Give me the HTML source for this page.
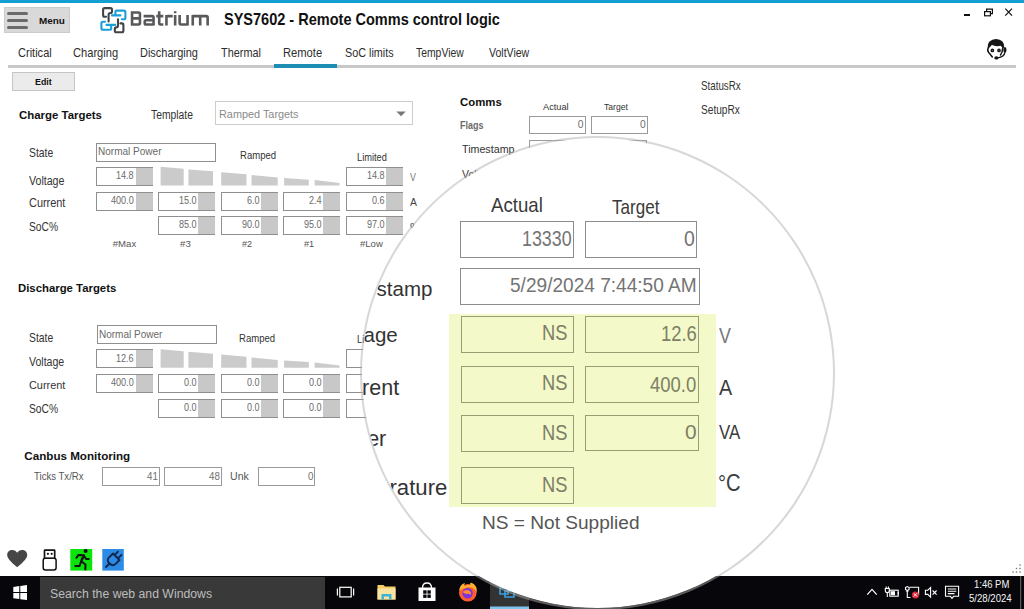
<!DOCTYPE html><html><head><meta charset="utf-8"><style>
html,body{margin:0;padding:0;}
body{width:1024px;height:609px;overflow:hidden;position:relative;background:#fff;font-family:"Liberation Sans",sans-serif;}
.t{position:absolute;white-space:nowrap;line-height:1;transform-origin:0 0;}
.b{position:absolute;box-sizing:border-box;}
svg{position:absolute;overflow:visible;}
</style></head><body>
<div class="b" style="left:0px;top:0px;width:1024px;height:3px;background:#12a0d3"></div>
<div class="b" style="left:4px;top:7px;width:66px;height:26px;background:#d9d9d9;border:1px solid #cbcbcb"></div>
<div class="b" style="left:7px;top:11.5px;width:21px;height:3px;background:#6a6a6a;border-radius:1.5px"></div>
<div class="b" style="left:7px;top:18.5px;width:21px;height:3px;background:#6a6a6a;border-radius:1.5px"></div>
<div class="b" style="left:7px;top:25.5px;width:21px;height:3px;background:#6a6a6a;border-radius:1.5px"></div>
<div class="t" style="left:38.94px;top:16.00px;font-size:9.45px;color:#111;font-weight:bold;transform:scaleX(1.0507);">Menu</div>
<svg style="left:0;top:0" width="140" height="40" viewBox="0 0 140 40">
<g fill="none" stroke-width="2.1" stroke-linecap="round" stroke-linejoin="round">
<path d="M108.6,21.5 V18 M106,16.8 H104.6 Q103.1,16.8 103.1,15.3 V9.6 Q103.1,8.1 104.6,8.1 H110.5 Q112,8.1 112,9.6 V11.5 Q112,13 110.5,13 Q108.6,13 108.6,15 V18" stroke="#444446"/>
<path d="M112,15.4 H118 M116.5,10.6 H123.9 Q125.4,10.6 125.4,12.1 V17.7 Q125.4,19.2 123.9,19.2 H121.8 M116.5,10.6 Q115.4,10.6 115.4,12 V13.4 Q115.4,15.4 117.4,15.4 H120.5" stroke="#1aa0d6"/>
<path d="M115.2,24.9 H109 M110.3,29.8 H102.9 Q101.4,29.8 101.4,28.3 V23.2 Q101.4,21.7 102.9,21.7 H105 M110.3,29.8 Q111.2,29.8 111.2,28.5 V26.9 Q111.2,24.9 109.2,24.9 H106.5" stroke="#1aa0d6"/>
<path d="M118,19.2 V23 M120.5,23.4 H121.9 Q123.4,23.4 123.4,24.9 V30.8 Q123.4,32.3 121.9,32.3 H116.3 Q114.8,32.3 114.8,30.8 V29 Q114.8,27.4 116.3,27.4 Q118,27.4 118,25.4 V23" stroke="#444446"/>
</g></svg>
<svg style="left:0;top:0" width="220" height="40"><g fill="none" stroke="#59595b" stroke-width="2.6" stroke-linejoin="round" stroke-linecap="butt">
<path d="M132.05,11.3 V25.6 M130.9,12.45 H138.5 Q139.95,12.45 139.95,13.9 V17 Q139.95,18.4 138.5,18.4 H132.05 M132.05,18.4 H138.8 Q139.95,18.4 139.95,19.8 V23 Q139.95,24.45 138.5,24.45 H130.9"/>
<path d="M143.6,16.15 H152.2 Q153.55,16.15 153.55,17.5 V25.6 M153.55,24.45 H146 Q144.75,24.45 144.75,23.2 V21.5 Q144.75,20.3 146,20.3 H153.55"/>
<path d="M159.2,11.3 V23.1 Q159.2,24.45 160.5,24.45 H163.3 M156.3,16.15 H163.3"/>
<path d="M166.45,15 V25.6 M166.45,17.5 Q166.45,16.15 167.8,16.15 H172.7"/>
<path d="M175.15,15 V25.6 M175.15,11.3 V13.3"/>
<path d="M179.65,15 V23.1 Q179.65,24.45 181,24.45 H187.55 M187.55,15 V25.6"/>
<path d="M192.75,15 V25.6 M192.75,16.15 H206.3 Q207.65,16.15 207.65,17.5 V25.6 M200.2,16.15 V25.6"/>
</g></svg>
<div class="t" style="left:224.48px;top:12.00px;font-size:15.99px;color:#111;font-weight:bold;transform:scaleX(0.9081);">SYS7602 - Remote Comms control logic</div>
<div class="b" style="left:964px;top:14px;width:6px;height:1.5px;background:#111"></div>
<svg style="left:0;top:0" width="1024" height="40"><g fill="none" stroke="#111" stroke-width="1.2">
<rect x="984.6" y="11.6" width="5.8" height="4.2"/><path d="M986.6,11.6 V9.2 H992.4 V13.6 H990.4"/>
<path d="M1005.3,8.6 L1012,15.6 M1012,8.6 L1005.3,15.6"/></g></svg>
<div class="t" style="left:18.24px;top:48.00px;font-size:11.92px;color:#2d2d2d;font-weight:normal;transform:scaleX(0.9267);">Critical</div>
<div class="t" style="left:72.73px;top:48.00px;font-size:11.92px;color:#2d2d2d;font-weight:normal;transform:scaleX(0.9342);">Charging</div>
<div class="t" style="left:140.10px;top:48.00px;font-size:11.92px;color:#2d2d2d;font-weight:normal;transform:scaleX(0.9217);">Discharging</div>
<div class="t" style="left:220.76px;top:48.00px;font-size:11.92px;color:#2d2d2d;font-weight:normal;transform:scaleX(0.9145);">Thermal</div>
<div class="t" style="left:283.08px;top:48.00px;font-size:11.92px;color:#2d2d2d;font-weight:normal;transform:scaleX(0.9397);">Remote</div>
<div class="t" style="left:345.11px;top:48.00px;font-size:11.92px;color:#2d2d2d;font-weight:normal;transform:scaleX(0.9076);">SoC limits</div>
<div class="t" style="left:416.47px;top:48.00px;font-size:11.92px;color:#2d2d2d;font-weight:normal;transform:scaleX(0.8723);">TempView</div>
<div class="t" style="left:488.95px;top:48.00px;font-size:11.92px;color:#2d2d2d;font-weight:normal;transform:scaleX(0.8846);">VoltView</div>
<div class="b" style="left:8px;top:65px;width:1008px;height:2.5px;background:#c8c8c8"></div>
<div class="b" style="left:274px;top:64px;width:63px;height:3.5px;background:#1e8db3"></div>
<svg style="left:0;top:0" width="1024" height="70">
<path d="M988,48.8 Q987.2,44 989.5,41.5 Q992.3,38.8 996,38.9 Q1000.2,38.9 1002.5,41.5 Q1004.3,43.6 1004.2,47.5 L1002.8,48.5 Q1001.5,46.5 1000.5,45.8 Q997,46.8 993.5,45.6 Q992.6,45.2 992,44.8 Q990.5,46.8 988,48.8Z" fill="#161616"/>
<path d="M988.3,47.5 Q987,50.5 988.7,52.5 Q990.3,54.2 992.3,57" fill="none" stroke="#161616" stroke-width="1.5" stroke-linecap="round"/>
<path d="M1002.6,48.5 Q1002.5,52.5 1000.5,55" fill="none" stroke="#161616" stroke-width="1.5" stroke-linecap="round"/>
<ellipse cx="1004.9" cy="49.9" rx="1.6" ry="2.8" fill="#161616"/>
<path d="M1005,52.2 Q1004.2,57.3 997.8,57.8" fill="none" stroke="#161616" stroke-width="1.3"/>
<ellipse cx="996.4" cy="57.9" rx="2.1" ry="1.7" fill="#161616"/>
<circle cx="992.4" cy="50.4" r="1.1" fill="none" stroke="#161616" stroke-width="1.5"/>
<circle cx="999" cy="50.4" r="1.1" fill="none" stroke="#161616" stroke-width="1.5"/>
</svg>
<div class="b" style="left:12px;top:72px;width:63px;height:19px;background:#ebebeb;border:1px solid #c6c6c6"></div>
<div class="t" style="left:34.81px;top:78.00px;font-size:9.30px;color:#111;font-weight:bold;transform:scaleX(0.9505);">Edit</div>
<div class="t" style="left:701.26px;top:81.00px;font-size:11.92px;color:#333;font-weight:normal;transform:scaleX(0.8220);">StatusRx</div>
<div class="t" style="left:701.24px;top:104.00px;font-size:12.50px;color:#333;font-weight:normal;transform:scaleX(0.8107);">SetupRx</div>
<div class="t" style="left:19.33px;top:109.00px;font-size:11.63px;color:#111;font-weight:bold;transform:scaleX(0.9829);">Charge Targets</div>
<div class="t" style="left:150.77px;top:109.00px;font-size:12.50px;color:#333;font-weight:normal;transform:scaleX(0.8270);">Template</div>
<div class="b" style="left:214.5px;top:101.3px;width:198.3px;height:23.4px;background:#fff;border:1px solid #cdcdcd"></div>
<div class="t" style="left:218.81px;top:109.00px;font-size:11.19px;color:#8a8a8a;font-weight:normal;transform:scaleX(0.9716);">Ramped Targets</div>
<svg style="left:0;top:0" width="1" height="1"><polygon points="396.4,111.6 405.8,111.6 401.1,116.2" fill="#777"/></svg>
<div class="t" style="left:29.03px;top:147.00px;font-size:12.35px;color:#333;font-weight:normal;transform:scaleX(0.8400);">State</div>
<div class="t" style="left:28.95px;top:175.00px;font-size:12.65px;color:#333;font-weight:normal;transform:scaleX(0.8398);">Voltage</div>
<div class="t" style="left:28.95px;top:198.00px;font-size:11.92px;color:#333;font-weight:normal;transform:scaleX(0.9168);">Current</div>
<div class="t" style="left:29.03px;top:222.00px;font-size:11.92px;color:#333;font-weight:normal;transform:scaleX(0.8623);">SoC%</div>
<div class="b" style="left:96.2px;top:142.6px;width:119.8px;height:19px;background:#fff;border:1px solid #8f8f8f"></div>
<div class="t" style="left:98.28px;top:146.00px;font-size:10.90px;color:#6a6a6a;font-weight:normal;transform:scaleX(0.9208);">Normal Power</div>
<div class="t" style="left:239.52px;top:150.00px;font-size:11.05px;color:#333;font-weight:normal;transform:scaleX(0.8646);">Ramped</div>
<div class="t" style="left:356.74px;top:153.00px;font-size:10.47px;color:#333;font-weight:normal;transform:scaleX(0.8850);">Limited</div>
<div class="b" style="left:95.5px;top:166.8px;width:57px;height:19.1px;background:#fff;border:1px solid #8f8f8f"></div>
<div class="b" style="left:135.5px;top:166.8px;width:17px;height:19.1px;background:#c8c8c8;border-top:1px solid #8f8f8f;border-bottom:1px solid #8f8f8f"></div>
<div class="t" style="left:116.05px;top:171.00px;font-size:10.30px;color:#6b6b6b;font-weight:normal;transform:scaleX(0.8800);">14.8</div>
<div class="b" style="left:346.2px;top:166.8px;width:57px;height:19.1px;background:#fff;border:1px solid #8f8f8f"></div>
<div class="b" style="left:386.2px;top:166.8px;width:17px;height:19.1px;background:#c8c8c8;border-top:1px solid #8f8f8f;border-bottom:1px solid #8f8f8f"></div>
<div class="t" style="left:366.75px;top:171.00px;font-size:10.30px;color:#6b6b6b;font-weight:normal;transform:scaleX(0.8800);">14.8</div>
<div class="b" style="left:95.5px;top:191.6px;width:57px;height:19.1px;background:#fff;border:1px solid #8f8f8f"></div>
<div class="b" style="left:135.5px;top:191.6px;width:17px;height:19.1px;background:#c8c8c8;border-top:1px solid #8f8f8f;border-bottom:1px solid #8f8f8f"></div>
<div class="t" style="left:110.97px;top:196.00px;font-size:10.30px;color:#6b6b6b;font-weight:normal;transform:scaleX(0.8800);">400.0</div>
<div class="b" style="left:158.3px;top:191.6px;width:57px;height:19.1px;background:#fff;border:1px solid #8f8f8f"></div>
<div class="b" style="left:198.3px;top:191.6px;width:17px;height:19.1px;background:#c8c8c8;border-top:1px solid #8f8f8f;border-bottom:1px solid #8f8f8f"></div>
<div class="t" style="left:178.81px;top:196.00px;font-size:10.30px;color:#6b6b6b;font-weight:normal;transform:scaleX(0.8800);">15.0</div>
<div class="b" style="left:221.2px;top:191.6px;width:57px;height:19.1px;background:#fff;border:1px solid #8f8f8f"></div>
<div class="b" style="left:261.2px;top:191.6px;width:17px;height:19.1px;background:#c8c8c8;border-top:1px solid #8f8f8f;border-bottom:1px solid #8f8f8f"></div>
<div class="t" style="left:246.75px;top:196.00px;font-size:10.30px;color:#6b6b6b;font-weight:normal;transform:scaleX(0.8800);">6.0</div>
<div class="b" style="left:283.3px;top:191.6px;width:57px;height:19.1px;background:#fff;border:1px solid #8f8f8f"></div>
<div class="b" style="left:323.3px;top:191.6px;width:17px;height:19.1px;background:#c8c8c8;border-top:1px solid #8f8f8f;border-bottom:1px solid #8f8f8f"></div>
<div class="t" style="left:308.77px;top:196.00px;font-size:10.30px;color:#6b6b6b;font-weight:normal;transform:scaleX(0.8800);">2.4</div>
<div class="b" style="left:346.2px;top:191.6px;width:57px;height:19.1px;background:#fff;border:1px solid #8f8f8f"></div>
<div class="b" style="left:386.2px;top:191.6px;width:17px;height:19.1px;background:#c8c8c8;border-top:1px solid #8f8f8f;border-bottom:1px solid #8f8f8f"></div>
<div class="t" style="left:371.80px;top:196.00px;font-size:10.30px;color:#6b6b6b;font-weight:normal;transform:scaleX(0.8800);">0.6</div>
<div class="b" style="left:158.3px;top:216.2px;width:57px;height:19.1px;background:#fff;border:1px solid #8f8f8f"></div>
<div class="b" style="left:198.3px;top:216.2px;width:17px;height:19.1px;background:#c8c8c8;border-top:1px solid #8f8f8f;border-bottom:1px solid #8f8f8f"></div>
<div class="t" style="left:178.81px;top:220.00px;font-size:10.30px;color:#6b6b6b;font-weight:normal;transform:scaleX(0.8800);">85.0</div>
<div class="b" style="left:221.2px;top:216.2px;width:57px;height:19.1px;background:#fff;border:1px solid #8f8f8f"></div>
<div class="b" style="left:261.2px;top:216.2px;width:17px;height:19.1px;background:#c8c8c8;border-top:1px solid #8f8f8f;border-bottom:1px solid #8f8f8f"></div>
<div class="t" style="left:241.71px;top:220.00px;font-size:10.30px;color:#6b6b6b;font-weight:normal;transform:scaleX(0.8800);">90.0</div>
<div class="b" style="left:283.3px;top:216.2px;width:57px;height:19.1px;background:#fff;border:1px solid #8f8f8f"></div>
<div class="b" style="left:323.3px;top:216.2px;width:17px;height:19.1px;background:#c8c8c8;border-top:1px solid #8f8f8f;border-bottom:1px solid #8f8f8f"></div>
<div class="t" style="left:303.81px;top:220.00px;font-size:10.30px;color:#6b6b6b;font-weight:normal;transform:scaleX(0.8800);">95.0</div>
<div class="b" style="left:346.2px;top:216.2px;width:57px;height:19.1px;background:#fff;border:1px solid #8f8f8f"></div>
<div class="b" style="left:386.2px;top:216.2px;width:17px;height:19.1px;background:#c8c8c8;border-top:1px solid #8f8f8f;border-bottom:1px solid #8f8f8f"></div>
<div class="t" style="left:366.71px;top:220.00px;font-size:10.30px;color:#6b6b6b;font-weight:normal;transform:scaleX(0.8800);">97.0</div>
<svg style="left:0;top:0" width="1" height="1"><polygon points="160.6,166.8 183.7,168.8 183.7,185.4 160.6,185.4" fill="#cbcbcb"/></svg>
<svg style="left:0;top:0" width="1" height="1"><polygon points="188.4,169.4 213,171.3 213,185.4 188.4,185.4" fill="#cbcbcb"/></svg>
<svg style="left:0;top:0" width="1" height="1"><polygon points="221.2,172.2 246.5,174.3 246.5,185.4 221.2,185.4" fill="#cbcbcb"/></svg>
<svg style="left:0;top:0" width="1" height="1"><polygon points="251.5,175 277.7,177.6 277.7,185.4 251.5,185.4" fill="#cbcbcb"/></svg>
<svg style="left:0;top:0" width="1" height="1"><polygon points="284.1,178 308.8,179.7 308.8,185.4 284.1,185.4" fill="#cbcbcb"/></svg>
<svg style="left:0;top:0" width="1" height="1"><polygon points="314.6,180.1 339.5,183 339.5,185.4 314.6,185.4" fill="#cbcbcb"/></svg>
<div class="t" style="left:112.76px;top:239.00px;font-size:9.59px;color:#555;font-weight:normal;">#Max</div>
<div class="t" style="left:179.96px;top:239.00px;font-size:9.59px;color:#555;font-weight:normal;transform:scaleX(1.0091);">#3</div>
<div class="t" style="left:242.16px;top:239.00px;font-size:9.59px;color:#555;font-weight:normal;transform:scaleX(0.9560);">#2</div>
<div class="t" style="left:304.46px;top:239.00px;font-size:9.59px;color:#555;font-weight:normal;transform:scaleX(0.9547);">#1</div>
<div class="t" style="left:360.16px;top:239.00px;font-size:9.59px;color:#555;font-weight:normal;transform:scaleX(0.9950);">#Low</div>
<div class="t" style="left:409.96px;top:173.00px;font-size:10.03px;color:#777;font-weight:normal;transform:scaleX(0.8786);">V</div>
<div class="t" style="left:410.38px;top:198.00px;font-size:10.47px;color:#444;font-weight:normal;transform:scaleX(0.9943);">A</div>
<div class="t" style="left:409.77px;top:221.00px;font-size:11.63px;color:#444;font-weight:normal;transform:scaleX(1.0305);">%</div>
<div class="t" style="left:18.24px;top:283.00px;font-size:11.48px;color:#111;font-weight:bold;transform:scaleX(0.9904);">Discharge Targets</div>
<div class="t" style="left:29.03px;top:332.00px;font-size:12.35px;color:#333;font-weight:normal;transform:scaleX(0.8400);">State</div>
<div class="t" style="left:28.95px;top:356.00px;font-size:12.21px;color:#333;font-weight:normal;transform:scaleX(0.8649);">Voltage</div>
<div class="t" style="left:28.95px;top:379.00px;font-size:11.63px;color:#333;font-weight:normal;transform:scaleX(0.9371);">Current</div>
<div class="t" style="left:29.03px;top:403.00px;font-size:12.35px;color:#333;font-weight:normal;transform:scaleX(0.8319);">SoC%</div>
<div class="b" style="left:97.2px;top:325.3px;width:120px;height:18.6px;background:#fff;border:1px solid #8f8f8f"></div>
<div class="t" style="left:99.18px;top:330.00px;font-size:10.17px;color:#6a6a6a;font-weight:normal;transform:scaleX(0.9850);">Normal Power</div>
<div class="t" style="left:239.41px;top:333.00px;font-size:10.61px;color:#333;font-weight:normal;transform:scaleX(0.9027);">Ramped</div>
<div class="t" style="left:356.74px;top:335.00px;font-size:10.47px;color:#333;font-weight:normal;transform:scaleX(0.8850);">Limited</div>
<div class="b" style="left:95.5px;top:349.20000000000005px;width:57px;height:19.1px;background:#fff;border:1px solid #8f8f8f"></div>
<div class="b" style="left:135.5px;top:349.20000000000005px;width:17px;height:19.1px;background:#c8c8c8;border-top:1px solid #8f8f8f;border-bottom:1px solid #8f8f8f"></div>
<div class="t" style="left:116.06px;top:354.00px;font-size:10.30px;color:#6b6b6b;font-weight:normal;transform:scaleX(0.8800);">12.6</div>
<div class="b" style="left:346.2px;top:349.20000000000005px;width:57px;height:19.1px;background:#fff;border:1px solid #8f8f8f"></div>
<div class="b" style="left:386.2px;top:349.20000000000005px;width:17px;height:19.1px;background:#c8c8c8;border-top:1px solid #8f8f8f;border-bottom:1px solid #8f8f8f"></div>
<div class="b" style="left:95.5px;top:374.0px;width:57px;height:19.1px;background:#fff;border:1px solid #8f8f8f"></div>
<div class="b" style="left:135.5px;top:374.0px;width:17px;height:19.1px;background:#c8c8c8;border-top:1px solid #8f8f8f;border-bottom:1px solid #8f8f8f"></div>
<div class="t" style="left:110.97px;top:378.00px;font-size:10.30px;color:#6b6b6b;font-weight:normal;transform:scaleX(0.8800);">400.0</div>
<div class="b" style="left:158.3px;top:374.0px;width:57px;height:19.1px;background:#fff;border:1px solid #8f8f8f"></div>
<div class="b" style="left:198.3px;top:374.0px;width:17px;height:19.1px;background:#c8c8c8;border-top:1px solid #8f8f8f;border-bottom:1px solid #8f8f8f"></div>
<div class="t" style="left:183.85px;top:378.00px;font-size:10.30px;color:#6b6b6b;font-weight:normal;transform:scaleX(0.8800);">0.0</div>
<div class="b" style="left:221.2px;top:374.0px;width:57px;height:19.1px;background:#fff;border:1px solid #8f8f8f"></div>
<div class="b" style="left:261.2px;top:374.0px;width:17px;height:19.1px;background:#c8c8c8;border-top:1px solid #8f8f8f;border-bottom:1px solid #8f8f8f"></div>
<div class="t" style="left:246.75px;top:378.00px;font-size:10.30px;color:#6b6b6b;font-weight:normal;transform:scaleX(0.8800);">0.0</div>
<div class="b" style="left:283.3px;top:374.0px;width:57px;height:19.1px;background:#fff;border:1px solid #8f8f8f"></div>
<div class="b" style="left:323.3px;top:374.0px;width:17px;height:19.1px;background:#c8c8c8;border-top:1px solid #8f8f8f;border-bottom:1px solid #8f8f8f"></div>
<div class="t" style="left:308.85px;top:378.00px;font-size:10.30px;color:#6b6b6b;font-weight:normal;transform:scaleX(0.8800);">0.0</div>
<div class="b" style="left:346.2px;top:374.0px;width:57px;height:19.1px;background:#fff;border:1px solid #8f8f8f"></div>
<div class="b" style="left:386.2px;top:374.0px;width:17px;height:19.1px;background:#c8c8c8;border-top:1px solid #8f8f8f;border-bottom:1px solid #8f8f8f"></div>
<div class="b" style="left:158.3px;top:398.6px;width:57px;height:19.1px;background:#fff;border:1px solid #8f8f8f"></div>
<div class="b" style="left:198.3px;top:398.6px;width:17px;height:19.1px;background:#c8c8c8;border-top:1px solid #8f8f8f;border-bottom:1px solid #8f8f8f"></div>
<div class="t" style="left:183.85px;top:403.00px;font-size:10.30px;color:#6b6b6b;font-weight:normal;transform:scaleX(0.8800);">0.0</div>
<div class="b" style="left:221.2px;top:398.6px;width:57px;height:19.1px;background:#fff;border:1px solid #8f8f8f"></div>
<div class="b" style="left:261.2px;top:398.6px;width:17px;height:19.1px;background:#c8c8c8;border-top:1px solid #8f8f8f;border-bottom:1px solid #8f8f8f"></div>
<div class="t" style="left:246.75px;top:403.00px;font-size:10.30px;color:#6b6b6b;font-weight:normal;transform:scaleX(0.8800);">0.0</div>
<div class="b" style="left:283.3px;top:398.6px;width:57px;height:19.1px;background:#fff;border:1px solid #8f8f8f"></div>
<div class="b" style="left:323.3px;top:398.6px;width:17px;height:19.1px;background:#c8c8c8;border-top:1px solid #8f8f8f;border-bottom:1px solid #8f8f8f"></div>
<div class="t" style="left:308.85px;top:403.00px;font-size:10.30px;color:#6b6b6b;font-weight:normal;transform:scaleX(0.8800);">0.0</div>
<div class="b" style="left:346.2px;top:398.6px;width:57px;height:19.1px;background:#fff;border:1px solid #8f8f8f"></div>
<div class="b" style="left:386.2px;top:398.6px;width:17px;height:19.1px;background:#c8c8c8;border-top:1px solid #8f8f8f;border-bottom:1px solid #8f8f8f"></div>
<svg style="left:0;top:0" width="1" height="1"><polygon points="160.6,349.20000000000005 183.7,351.20000000000005 183.7,367.8 160.6,367.8" fill="#cbcbcb"/></svg>
<svg style="left:0;top:0" width="1" height="1"><polygon points="188.4,351.8 213,353.70000000000005 213,367.8 188.4,367.8" fill="#cbcbcb"/></svg>
<svg style="left:0;top:0" width="1" height="1"><polygon points="221.2,354.6 246.5,356.70000000000005 246.5,367.8 221.2,367.8" fill="#cbcbcb"/></svg>
<svg style="left:0;top:0" width="1" height="1"><polygon points="251.5,357.4 277.7,360.0 277.7,367.8 251.5,367.8" fill="#cbcbcb"/></svg>
<svg style="left:0;top:0" width="1" height="1"><polygon points="284.1,360.4 308.8,362.1 308.8,367.8 284.1,367.8" fill="#cbcbcb"/></svg>
<svg style="left:0;top:0" width="1" height="1"><polygon points="314.6,362.5 339.5,365.4 339.5,367.8 314.6,367.8" fill="#cbcbcb"/></svg>
<div class="t" style="left:24.32px;top:450.00px;font-size:11.63px;color:#111;font-weight:bold;">Canbus Monitoring</div>
<div class="t" style="left:34.38px;top:470.00px;font-size:11.77px;color:#555;font-weight:normal;transform:scaleX(0.8152);">Ticks Tx/Rx</div>
<div class="t" style="left:230.18px;top:470.00px;font-size:11.77px;color:#555;font-weight:normal;transform:scaleX(0.8979);">Unk</div>
<div class="b" style="left:102.3px;top:467.3px;width:57.5px;height:18.3px;background:#fff;border:1px solid #9a9a9a"></div>
<div class="t" style="left:147.09px;top:472.00px;font-size:10.30px;color:#6f6f6f;font-weight:normal;transform:scaleX(0.9500);">41</div>
<div class="b" style="left:164.4px;top:467.3px;width:57.5px;height:18.3px;background:#fff;border:1px solid #9a9a9a"></div>
<div class="t" style="left:209.14px;top:472.00px;font-size:10.30px;color:#6f6f6f;font-weight:normal;transform:scaleX(0.9500);">48</div>
<div class="b" style="left:257.5px;top:467.3px;width:57.5px;height:18.3px;background:#fff;border:1px solid #9a9a9a"></div>
<div class="t" style="left:307.64px;top:472.00px;font-size:10.30px;color:#6f6f6f;font-weight:normal;transform:scaleX(0.9500);">0</div>
<div class="t" style="left:460.03px;top:98.00px;font-size:10.47px;color:#111;font-weight:bold;transform:scaleX(1.0873);">Comms</div>
<div class="t" style="left:543.28px;top:102.00px;font-size:9.59px;color:#333;font-weight:normal;transform:scaleX(0.9615);">Actual</div>
<div class="t" style="left:603.61px;top:102.00px;font-size:9.74px;color:#333;font-weight:normal;transform:scaleX(0.8831);">Target</div>
<div class="t" style="left:460.30px;top:121.00px;font-size:10.32px;color:#6a6a6a;font-weight:bold;transform:scaleX(0.8669);">Flags</div>
<div class="b" style="left:528.8px;top:116px;width:56.8px;height:18.4px;background:#fff;border:1px solid #9a9a9a"></div>
<div class="t" style="left:577.77px;top:120.00px;font-size:10.30px;color:#6f6f6f;font-weight:normal;">0</div>
<div class="b" style="left:591.1px;top:116px;width:56.8px;height:18.4px;background:#fff;border:1px solid #9a9a9a"></div>
<div class="t" style="left:640.07px;top:120.00px;font-size:10.30px;color:#6f6f6f;font-weight:normal;">0</div>
<div class="t" style="left:462.16px;top:144.00px;font-size:11.05px;color:#333;font-weight:normal;transform:scaleX(0.9681);">Timestamp</div>
<div class="b" style="left:528.8px;top:139.8px;width:118.2px;height:18.4px;background:#fff;border:1px solid #9a9a9a"></div>
<div class="t" style="left:461.95px;top:169.00px;font-size:10.90px;color:#333;font-weight:normal;transform:scaleX(0.9605);">Voltage</div>
<svg style="left:0;top:0" width="140" height="580">
<path d="M17.2,567.3 C13.8,564 7.2,559.3 7.2,554.9 C7.2,551.6 9.5,549.9 12.3,549.9 C14.6,549.9 16.2,551.1 17.2,552.7 C18.2,551.1 19.8,549.9 22.1,549.9 C24.9,549.9 27.2,551.6 27.2,554.9 C27.2,559.3 20.6,564 17.2,567.3Z" fill="#464646"/>
<rect x="44.5" y="550.2" width="10.2" height="8.3" rx="0.5" fill="#fff" stroke="#111" stroke-width="1.7"/>
<circle cx="47.9" cy="553.8" r="1.1" fill="#111"/><circle cx="51.7" cy="553.8" r="1.1" fill="#111"/>
<rect x="43.2" y="558.2" width="12.9" height="11.7" rx="2.2" fill="#fff" stroke="#111" stroke-width="1.5"/>
<rect x="70.3" y="549" width="21.9" height="21.6" fill="#0be40b"/>
<circle cx="85.6" cy="551" r="2" fill="#111"/>
<path d="M76,558.5 L78.3,555 L84,555.3 L81.5,561.5 L85.5,564.5 L85.3,570.3 M82.3,557.5 L79.6,566 L74.5,566 M84.2,556 L86,559 L89.5,559" fill="none" stroke="#111" stroke-width="2" stroke-linejoin="round"/>
<rect x="102.3" y="549" width="21.5" height="21.6" fill="#2b8be6"/>
<g transform="translate(113.6,559.4) rotate(-45)" fill="none" stroke="#10284a" stroke-width="1.9" stroke-linejoin="round">
<path d="M3.8,-4.6 H-1.8 Q-5.8,-4.6 -5.8,0 Q-5.8,4.6 -1.8,4.6 H3.8 Z"/>
<path d="M3.8,-2.4 H8.6 M3.8,2.4 H8.6 M-5.8,0 H-10.8" stroke-linecap="round"/>
</g>
</svg>
<div class="b" style="left:0px;top:576px;width:1024px;height:33px;background:#07070b"></div>
<div class="b" style="left:40px;top:577px;width:285px;height:32px;background:#393939"></div>
<svg style="left:0;top:0" width="1024" height="609">
<path d="M13.3,587 L19.3,586.1 V592.1 H13.3 Z M20.3,585.9 L27,585 V592.1 H20.3Z M13.3,593.1 H19.3 V599.1 L13.3,598.2Z M20.3,593.1 H27 V600.1 L20.3,599.3Z" fill="#fff"/>
</svg>
<div class="t" style="left:49.74px;top:587.00px;font-size:13.08px;color:#bdbdbd;font-weight:normal;transform:scaleX(0.9366);">Search the web and Windows</div>
<svg style="left:0;top:0" width="1024" height="609">
<g fill="none" stroke="#fff" stroke-width="1.2">
<rect x="339.8" y="587.3" width="11.4" height="9.6"/><path d="M337.4,588.6 V595.6 M353.6,588.6 V595.6"/>
</g>
<path d="M377.5,585 H383.5 L385,586.5 H395.5 V599.5 H377.5Z" fill="#f5cf64"/>
<rect x="377.5" y="588.5" width="18" height="11" fill="#f9e3a0"/>
<path d="M381.5,594 H391.5 V599.5 H389 V596.5 H384 V599.5 H381.5Z" fill="#3cb4d8"/>
<path d="M422.5,588 Q422.5,583 427,583 Q431.5,583 431.5,588" fill="none" stroke="#fff" stroke-width="1.3"/>
<rect x="418.5" y="587.5" width="17" height="13.5" fill="#fff"/>
<rect x="423.2" y="590.3" width="3.4" height="3.4" fill="#07070b"/><rect x="427.4" y="590.3" width="3.4" height="3.4" fill="#07070b"/>
<rect x="423.2" y="594.5" width="3.4" height="3.4" fill="#07070b"/><rect x="427.4" y="594.5" width="3.4" height="3.4" fill="#07070b"/>
<circle cx="467.8" cy="592.8" r="8.8" fill="#ff5d2e"/>
<path d="M459.2,591 Q459.5,584.5 465,583 Q463.5,585 464.5,586.5 Q467,584.3 470.5,585 Q469,583 471.5,582.8 Q477.5,585.5 476.8,592.5 Q474,586.8 468,587.3 Q462.5,588 459.2,591Z" fill="#ffb02e"/>
<circle cx="467.6" cy="593.3" r="5.2" fill="#7a35d8"/>
<path d="M462.6,592 Q465,589.5 468.5,590.2 Q471.5,591.5 471,595 Q469,593 466.5,594 Q464,593.5 462.6,592Z" fill="#ff8a3a"/>
<rect x="490" y="576" width="39" height="33" fill="#333"/>
<rect x="490" y="606.5" width="39" height="2.5" fill="#7fc4ec"/>
<path d="M500,588 H508 V594 H500Z M505,591 H514 V597 H505Z" fill="none" stroke="#3aa0e0" stroke-width="1.6"/>
</svg>
<svg style="left:0;top:0" width="1024" height="609">
<path d="M867.3,594.6 L872,589.4 L876.7,594.6" fill="none" stroke="#fff" stroke-width="1.2"/>
<g fill="none" stroke="#fff" stroke-width="1.1">
<rect x="889.8" y="590.2" width="8.4" height="6"/><path d="M898.2,592 V594.4"/>
<path d="M885.3,588.5 H889.3 V590.2 Q889.3,592.6 887.3,592.6 Q885.3,592.6 885.3,590.2Z M886.2,586.6 V588.5 M888.4,586.6 V588.5 M887.3,592.6 V597"/>
<path d="M909.5,587.3 H918.6 V595 M905.8,591 H908.8 M907.3,591 V597.5 H910.5"/>
<path d="M905.5,587.5 L907.3,586.6 L909.1,587.5 V589.5 L907.3,590.4 L905.5,589.5Z"/>
<path d="M925.4,590.2 H927.8 L930.6,587.5 V597.2 L927.8,594.4 H925.4Z"/>
<path d="M932.6,590.5 L936.6,594.6 M936.6,590.5 L932.6,594.6"/>
<path d="M945.5,586.2 H958.6 V596.3 H953.6 L952,598.4 L950.4,596.3 H945.5Z"/>
<path d="M947.8,589 H956.3 M947.8,591.3 H956.3 M947.8,593.6 H954.5"/>
</g>
<rect x="890.8" y="591.2" width="4.2" height="4" fill="#fff"/>
<circle cx="915.4" cy="594.9" r="3.5" fill="#e0253a"/>
<path d="M913.8,593.3 L917,596.5 M917,593.3 L913.8,596.5" stroke="#fff" stroke-width="1"/>
<rect x="1020" y="576" width="1.2" height="33" fill="#5a5a5a"/>
<g fill="#7a7a7a"><rect x="1019.3" y="564.3" width="1.4" height="1.4"/><rect x="1015.8" y="567.8" width="1.4" height="1.4"/><rect x="1019.3" y="567.8" width="1.4" height="1.4"/><rect x="1012.3" y="571.3" width="1.4" height="1.4"/><rect x="1015.8" y="571.3" width="1.4" height="1.4"/><rect x="1019.3" y="571.3" width="1.4" height="1.4"/></g>
</svg>
<div class="t" style="left:973.58px;top:580.00px;font-size:10.32px;color:#f4f4f4;font-weight:normal;transform:scaleX(0.9185);">1:46 PM</div>
<div class="t" style="left:969.42px;top:594.00px;font-size:10.03px;color:#f4f4f4;font-weight:normal;transform:scaleX(0.9585);">5/28/2024</div>
<div style="position:absolute;left:360.40000000000003px;top:136.0px;width:474.4px;height:474.4px;border-radius:50%;background:#fff;background-clip:padding-box;box-sizing:border-box;border:2px solid rgba(175,175,175,0.5);overflow:hidden">
<div style="position:absolute;left:-362.40000000000003px;top:-138.0px;width:1024px;height:609px">
<div class="t" style="left:491.06px;top:196.00px;font-size:19.62px;color:#3a3a3a;font-weight:normal;transform:scaleX(0.9514);">Actual</div>
<div class="t" style="left:612.12px;top:197.00px;font-size:20.49px;color:#3a3a3a;font-weight:normal;transform:scaleX(0.8325);">Target</div>
<div class="b" style="left:460.4px;top:221.25px;width:113.70000000000005px;height:37.14999999999998px;background:#fff;border:1.7px solid #8c8c8c"></div>
<div class="b" style="left:584.9px;top:221.25px;width:112.30000000000007px;height:37.14999999999998px;background:#fff;border:1.7px solid #8c8c8c"></div>
<div class="t" style="left:521.54px;top:229.00px;font-size:21.37px;color:#747474;font-weight:normal;transform:scaleX(0.8358);">13330</div>
<div class="t" style="left:683.74px;top:229.00px;font-size:21.37px;color:#747474;font-weight:normal;transform:scaleX(0.9105);">0</div>
<div class="b" style="left:460.4px;top:268.1px;width:239.5px;height:36.599999999999966px;background:#fff;border:1.7px solid #8c8c8c"></div>
<div class="t" style="left:510.44px;top:275.00px;font-size:20.49px;color:#747474;font-weight:normal;transform:scaleX(0.9313);">5/29/2024 7:44:50 AM</div>
<div class="t" style="left:331.78px;top:279.00px;font-size:20.50px;color:#333;font-weight:normal;">Timestamp</div>
<div class="b" style="left:449px;top:313.5px;width:266.5px;height:193.5px;background:#f3f9c9"></div>
<div class="b" style="left:460.5px;top:315.8px;width:113.79999999999995px;height:37.099999999999966px;background:transparent;border:1.7px solid #999c74"></div>
<div class="t" style="left:541.89px;top:323.00px;font-size:21.30px;color:#7d8066;font-weight:normal;transform:scaleX(0.8600);">NS</div>
<div class="b" style="left:460.5px;top:365.8px;width:113.79999999999995px;height:37.0px;background:transparent;border:1.7px solid #999c74"></div>
<div class="t" style="left:541.89px;top:373.00px;font-size:21.30px;color:#7d8066;font-weight:normal;transform:scaleX(0.8600);">NS</div>
<div class="b" style="left:460.5px;top:415px;width:113.79999999999995px;height:37px;background:transparent;border:1.7px solid #999c74"></div>
<div class="t" style="left:541.89px;top:423.00px;font-size:21.30px;color:#7d8066;font-weight:normal;transform:scaleX(0.8600);">NS</div>
<div class="b" style="left:460.5px;top:467px;width:113.79999999999995px;height:37.30000000000001px;background:transparent;border:1.7px solid #999c74"></div>
<div class="t" style="left:541.89px;top:475.00px;font-size:21.30px;color:#7d8066;font-weight:normal;transform:scaleX(0.8600);">NS</div>
<div class="b" style="left:585px;top:315.8px;width:113.60000000000002px;height:37.099999999999966px;background:transparent;border:1.7px solid #999c74"></div>
<div class="b" style="left:585px;top:365.8px;width:113.60000000000002px;height:37.0px;background:transparent;border:1.7px solid #999c74"></div>
<div class="b" style="left:585px;top:414.5px;width:113.60000000000002px;height:36.80000000000001px;background:transparent;border:1.7px solid #999c74"></div>
<div class="t" style="left:661.00px;top:324.00px;font-size:21.51px;color:#7d8066;font-weight:normal;transform:scaleX(0.8553);">12.6</div>
<div class="t" style="left:650.48px;top:375.00px;font-size:21.51px;color:#7d8066;font-weight:normal;transform:scaleX(0.8591);">400.0</div>
<div class="t" style="left:685.18px;top:421.00px;font-size:21.08px;color:#7d8066;font-weight:normal;transform:scaleX(0.9926);">0</div>
<div class="t" style="left:718.82px;top:325.00px;font-size:21.66px;color:#777;font-weight:normal;transform:scaleX(0.8278);">V</div>
<div class="t" style="left:718.86px;top:378.00px;font-size:21.51px;color:#3c3c3c;font-weight:normal;transform:scaleX(0.9184);">A</div>
<div class="t" style="left:718.83px;top:422.00px;font-size:20.49px;color:#3c3c3c;font-weight:normal;transform:scaleX(0.8232);">VA</div>
<div class="t" style="left:717.70px;top:471.00px;font-size:23.84px;color:#3c3c3c;font-weight:normal;transform:scaleX(0.8477);">°C</div>
<div class="t" style="left:329.38px;top:325.00px;font-size:20.50px;color:#333;font-weight:normal;">Voltage</div>
<div class="t" style="left:327.47px;top:378.00px;font-size:21.50px;color:#333;font-weight:normal;">Current</div>
<div class="t" style="left:325.32px;top:429.00px;font-size:21.50px;color:#333;font-weight:normal;">Power</div>
<div class="t" style="left:323.21px;top:478.00px;font-size:21.50px;color:#333;font-weight:normal;transform:scaleX(1.0300);">Temperature</div>
<div class="t" style="left:481.63px;top:513.00px;font-size:19.19px;color:#555;font-weight:normal;transform:scaleX(0.9944);">NS = Not Supplied</div>
</div></div>
</body></html>
